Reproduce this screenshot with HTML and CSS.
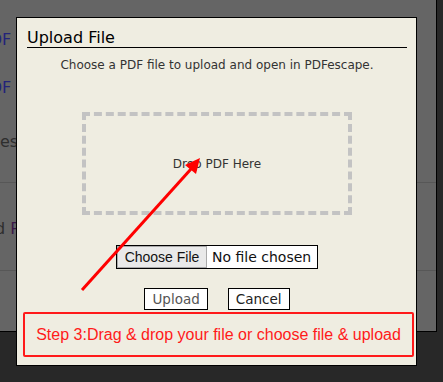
FILE: index.html
```html
<!DOCTYPE html>
<html lang="en">
<head>
  <meta charset="UTF-8" />
  <title>Upload File</title>
  <link rel="stylesheet" href="styles.css">
</head>
<body>

<div class="page">
  <div class="bg-row link">PDF</div>
  <div class="bg-row link second">PDF</div>
  <div class="bg-row dim">es</div>
  <div class="bg-sep"></div>
  <div class="bg-row dim mixed">d <span class="purple">P</span></div>
  <div class="bg-sep last"></div>
</div>

<div class="dialog">
  <h2 class="dialog-title">Upload File</h2>
  <p class="dialog-sub">Choose a PDF file to upload and open in PDFescape.</p>

  <div class="drop-zone">Drop PDF Here</div>

  <label class="file-pick">
    <span class="file-btn">Choose File</span>
    <span class="file-name">No file chosen</span>
    <input type="file" accept=".pdf" hidden>
  </label>

  <div class="actions">
    <button class="btn muted">Upload</button>
    <button class="btn">Cancel</button>
  </div>

  <div class="note">Step 3:Drag &amp; drop your file or choose file &amp; upload</div>
</div>

<svg class="arrow" width="443" height="382" viewBox="0 0 443 382">
  <line x1="82" y1="290" x2="191" y2="169" stroke="#ff0000" stroke-width="3"/>
  <polygon points="200,158 196,174 185,165" fill="#ff0000"/>
</svg>

</body>
</html>
```

FILE: styles.css
```css
body {
  margin: 0;
  background: #282828;
  font-family: "DejaVu Sans", sans-serif;
  width: 443px;
  height: 382px;
  overflow: hidden;
}
.page {
  width: 436px;
  height: 301px;
  background: #656565;
  border-right: 1px solid #000;
  border-bottom: 1px solid #000;
  padding-top: 30px;
}
.bg-row {
  font-size: 16px;
  line-height: 20px;
  white-space: nowrap;
}
.bg-row.link {
  color: #23237a;
  margin-left: -20px;
}
.bg-row.second {
  margin-top: 28px;
}
.bg-row.dim {
  color: #2e2e2e;
  margin-top: 34px;
}
.bg-row.mixed {
  margin-top: 36px;
  margin-left: -5px;
}
.purple {
  color: #3a1848;
}
.bg-sep {
  height: 1px;
  background: #575757;
  margin-top: 30px;
}
.bg-sep.last {
  margin-top: 31px;
}
.dialog {
  position: absolute;
  left: 16px;
  top: 17px;
  width: 380px;
  height: 347px;
  background: #efede1;
  border: 1px solid #000;
  padding: 0 9px 0 10px;
  display: flex;
  flex-direction: column;
  align-items: center;
}
.dialog-title {
  align-self: stretch;
  margin: 10px 0 0;
  font-size: 16px;
  font-weight: normal;
  line-height: 19px;
  color: #000;
  border-bottom: 1px solid #000;
}
.dialog-sub {
  margin: 10px 0 0;
  font-size: 12px;
  line-height: 14px;
  color: #333;
}
.drop-zone {
  margin-top: 40px;
  width: 262px;
  height: 95px;
  border: 4px dashed #c3c3c3;
  display: flex;
  align-items: center;
  justify-content: center;
  font-size: 12px;
  color: #333;
}
.file-pick {
  margin-top: 30px;
  display: flex;
  width: 200px;
  height: 22px;
  border: 1px solid #000;
  background: #fff;
  cursor: pointer;
}
.file-btn {
  width: 88px;
  border: 1px solid #a9a9a9;
  background: #e9e9e9;
  font-family: "Liberation Sans", Arial, sans-serif;
  font-size: 14px;
  color: #111;
  display: flex;
  align-items: center;
  justify-content: center;
}
.file-name {
  padding-left: 5px;
  font-size: 14px;
  color: #111;
  display: flex;
  align-items: center;
}
.actions {
  margin-top: 19px;
  display: flex;
  gap: 20px;
}
.btn {
  height: 22px;
  padding: 0 7px;
  border: 1px solid #000;
  background: #fff;
  font-family: "DejaVu Sans", sans-serif;
  font-size: 13.5px;
  color: #222;
  cursor: pointer;
}
.btn.muted {
  color: #555;
}
.note {
  margin: 2px -7px 0 -4px;
  align-self: stretch;
  height: 41px;
  border: 2.5px solid #ff1a1a;
  border-radius: 2px;
  display: flex;
  align-items: center;
  justify-content: center;
  font-family: "Liberation Sans", Arial, sans-serif;
  font-size: 16px;
  color: #ff1a1a;
}
.arrow {
  position: absolute;
  left: 0;
  top: 0;
  pointer-events: none;
}
```
